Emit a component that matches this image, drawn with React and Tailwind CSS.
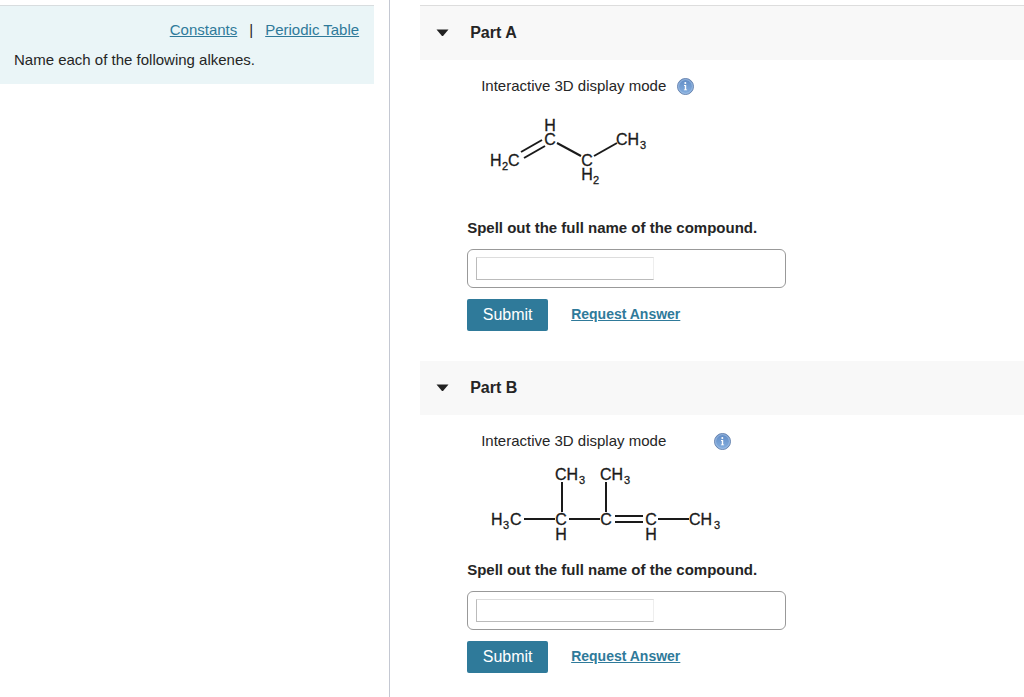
import React from 'react';

function InfoIcon() {
    return (
        <svg width="17" height="17" viewBox="0 0 17 17" aria-hidden="true">
            <defs>
                <linearGradient id="infoFill" x1="0" y1="0" x2="0" y2="1">
                    <stop offset="0" stopColor="#5f8ac4" />
                    <stop offset="1" stopColor="#86b0e0" />
                </linearGradient>
            </defs>
            <circle cx="8.5" cy="8.5" r="8" fill="url(#infoFill)" stroke="#6a86b0" />
            <circle cx="8.5" cy="8.5" r="6.9" fill="none" stroke="#a3c0e4" strokeWidth="0.8" />
            <circle cx="8.3" cy="5" r="1" fill="#fff" />
            <path d="M7 7h2.2v4.4h0.9v0.9H6.9v-0.9h0.9V7.9H7z" fill="#fff" />
        </svg>
    );
}

// atoms: [x, baseline, text, anchor], subs: [x, baseline, text]
function Molecule({ name, width, height, atoms, subs, bonds }) {
    return (
        <svg
            role="img"
            aria-label={name}
            width={width}
            height={height}
            className="mb-3 block overflow-visible fill-[#1a1a1a]"
        >
            {bonds.map((d) => (
                <path key={d} d={d} fill="none" stroke="#1a1a1a" strokeWidth="2" />
            ))}
            {atoms.map(([x, y, text, anchor]) => (
                <text key={`${x}-${y}`} x={x} y={y} textAnchor={anchor} stroke="#1a1a1a" strokeWidth="0.3" className="text-[16px]">
                    {text}
                </text>
            ))}
            {subs.map(([x, y, text]) => (
                <text key={`${x}-${y}`} x={x} y={y} stroke="#1a1a1a" strokeWidth="0.3" className="text-[11px]">
                    {text}
                </text>
            ))}
        </svg>
    );
}

const parts = [
    {
        id: 'A',
        infoRow: 'w-[213px]',
        molecule: {
            name: 'H2C=CH-CH2-CH3',
            width: 190,
            height: 110,
            atoms: [
                [9, 70, 'H', 'start'],
                [27, 70, 'C', 'start'],
                [69, 35, 'H', 'middle'],
                [69, 49, 'C', 'middle'],
                [106, 70, 'C', 'middle'],
                [106, 84, 'H', 'middle'],
                [135, 49, 'CH', 'start'],
            ],
            subs: [[21, 74, '2'], [112, 88, '2'], [159, 53, '3']],
            bonds: ['M40 56L61 44', 'M43 62L64 50', 'M76 47L100 60', 'M113 60L136 47'],
        },
    },
    {
        id: 'B',
        infoRow: 'w-[250px]',
        molecule: {
            name: 'CH3-CH(CH3)-C(CH3)=CH-CH3',
            width: 250,
            height: 97,
            atoms: [
                [10, 74, 'H', 'start'],
                [29, 74, 'C', 'start'],
                [74, 29, 'CH', 'start'],
                [119, 29, 'CH', 'start'],
                [80, 74, 'C', 'middle'],
                [80, 89, 'H', 'middle'],
                [125, 74, 'C', 'middle'],
                [170, 74, 'C', 'middle'],
                [170, 89, 'H', 'middle'],
                [208, 74, 'CH', 'start'],
            ],
            subs: [[22, 78, '3'], [98, 33, '3'], [143, 33, '3'], [233, 78, '3']],
            bonds: [
                'M43 68H74',
                'M88 68H119',
                'M134 65H162',
                'M134 71H162',
                'M177 68H208',
                'M81 31V61',
                'M125 31V61',
            ],
        },
    },
];

function Part({ id, infoRow, molecule }) {
    return (
        <section className="mb-[30px]">
            <h2 className="h-[54px] bg-[#f8f8f8]">
                <button type="button" className="flex h-full w-full items-center gap-[21px] pl-4 text-[16px] font-bold">
                    <svg width="13" height="8" viewBox="0 0 13 8" aria-hidden="true">
                        <path d="M0.5 0.5h12L7 7H6z" fill="#222" />
                    </svg>
                    Part {id}
                </button>
            </h2>
            <div className="pt-4 pl-[47px]">
                <div className="pl-[14px]">
                    <div className={`flex h-5 items-center justify-between ${infoRow}`}>
                        <span>Interactive 3D display mode</span>
                        <InfoIcon />
                    </div>
                    <Molecule {...molecule} />
                </div>
                <form onSubmit={(e) => e.preventDefault()}>
                    <label htmlFor={`answer-${id}`} className="mb-[11px] block font-bold">
                        Spell out the full name of the compound.
                    </label>
                    <div className="mb-[11px] max-w-[319px] rounded-md border border-[#999] px-2 py-[7px]">
                        <input
                            id={`answer-${id}`}
                            type="text"
                            className="block h-[23px] w-[178px] border border-t-[#ddd] border-r-[#eee] border-b-[#bbb] border-l-[#bbb] px-1 outline-none"
                        />
                    </div>
                    <div className="flex items-center gap-[23px]">
                        <button type="submit" className="h-8 w-[81px] rounded-xs bg-[#2f7a9a] text-[16px] text-white">
                            Submit
                        </button>
                        <a href="#" className="pb-[2px] text-[14px] font-bold text-[#2f7a9a] underline">
                            Request Answer
                        </a>
                    </div>
                </form>
            </div>
        </section>
    );
}

export default function App() {
    return (
        <div className="flex min-h-screen bg-white font-['Liberation_Sans',Arial,sans-serif] text-[15px] leading-5 text-[#252525]">
            <aside className="w-[38.1%] shrink-0 border-r border-[#c4c8d2] pt-[5px] pr-[15px]">
                <div className="border-t border-[#d8dddf] bg-[#eaf5f7] pt-[14px] pr-[15px] pb-[14px] pl-[14px]">
                    <nav className="mb-[10px] flex justify-end gap-3">
                        <a href="#" className="text-[#2f7a9a] underline">Constants</a>
                        <span>|</span>
                        <a href="#" className="text-[#2f7a9a] underline">Periodic Table</a>
                    </nav>
                    <p>Name each of the following alkenes.</p>
                </div>
            </aside>
            <main className="min-w-0 flex-1 pt-[5px] pl-[30px]">
                <div className="border-t border-[#ddd]">
                    {parts.map((part) => (
                        <Part key={part.id} {...part} />
                    ))}
                </div>
            </main>
        </div>
    );
}
